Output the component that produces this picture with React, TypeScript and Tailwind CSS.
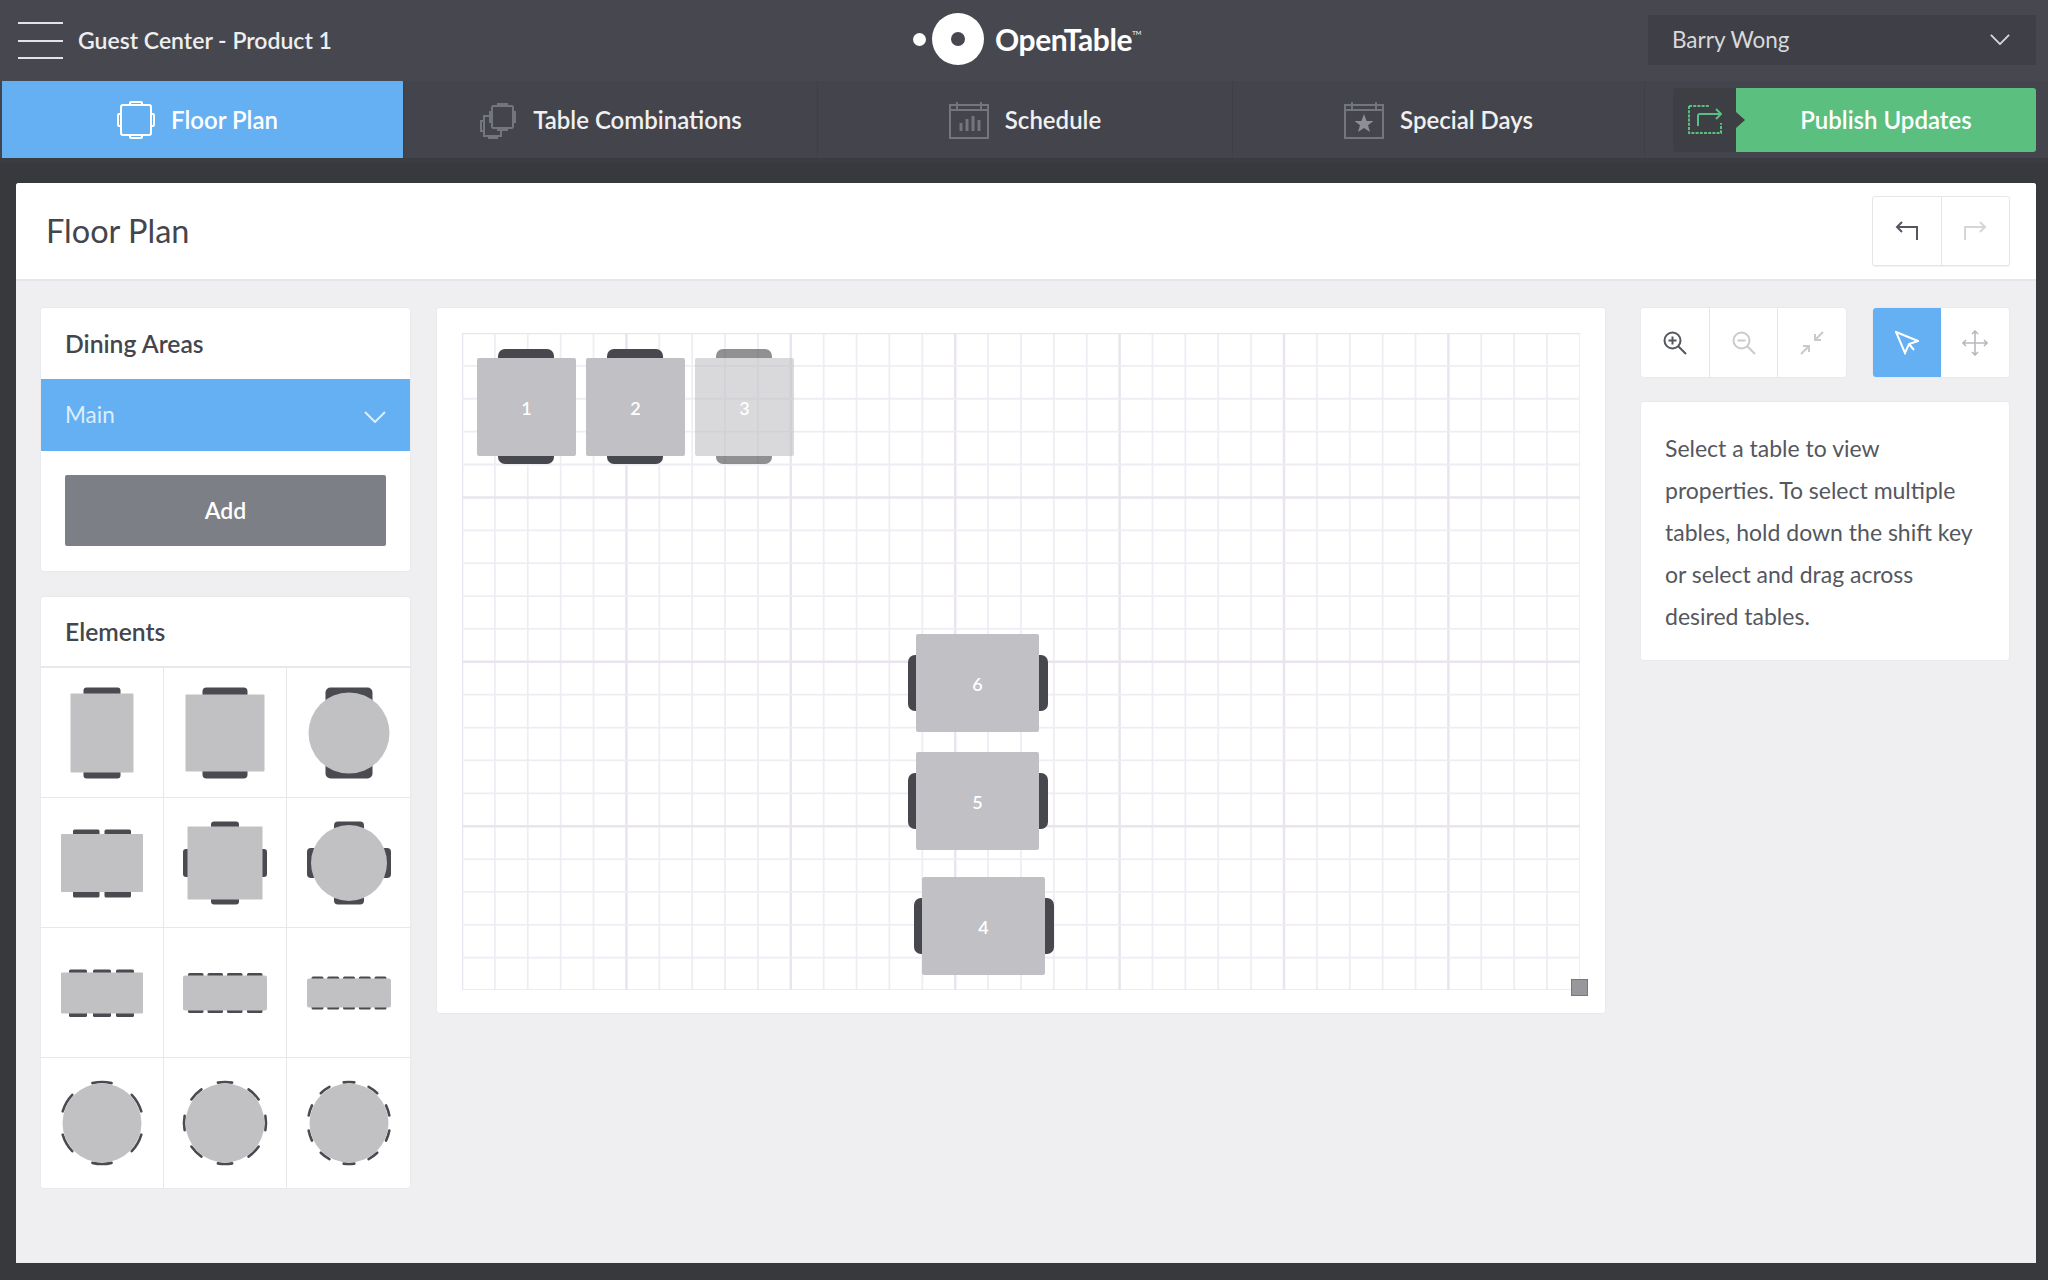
import type { ReactNode } from "react";

const CHAIR = "#4a4b50";
const TOP = "#c1c1c4";

// arc segment on a round table, angle in degrees from the top
function arcPath(r: number, deg: number, span: number) {
  const pt = (a: number) => {
    const rad = ((a - 90) * Math.PI) / 180;
    return `${(r * Math.cos(rad)).toFixed(2)} ${(r * Math.sin(rad)).toFixed(2)}`;
  };
  return `M${pt(deg - span / 2)} A${r} ${r} 0 0 1 ${pt(deg + span / 2)}`;
}

function IconBox({ children }: { children: ReactNode }) {
  return (
    <svg width="100" height="110" viewBox="-50 -55 100 110">
      {children}
    </svg>
  );
}

function Seat({ x, y, w, h, r = 3 }: { x: number; y: number; w: number; h: number; r?: number }) {
  return <rect x={x} y={y} width={w} height={h} rx={r} fill={CHAIR} />;
}

function Rows({ xs, w, top, bottom, h }: { xs: number[]; w: number; top: number; bottom: number; h: number }) {
  return (
    <>
      {xs.map((x) => (
        <g key={x}>
          <Seat x={x} y={top} w={w} h={h} r={1.5} />
          <Seat x={x} y={bottom - h} w={w} h={h} r={1.5} />
        </g>
      ))}
    </>
  );
}

function RoundTable({ count, span }: { count: number; span: number }) {
  const angles = Array.from({ length: count }, (_, i) => (i * 360) / count);
  return (
    <IconBox>
      {angles.map((a) => (
        <path key={a} d={arcPath(41, a, span)} fill="none" stroke={CHAIR} strokeWidth="2.6" strokeLinecap="round" />
      ))}
      <circle r="39.5" fill={TOP} />
    </IconBox>
  );
}

const elementIcons: ReactNode[] = [
  <IconBox key="a">
    <Seat x={-18.5} y={-45.5} w={37} h={12} />
    <Seat x={-18.5} y={33.5} w={37} h={12} />
    <rect x={-31.5} y={-39.5} width={63} height={79} rx={1} fill={TOP} />
  </IconBox>,
  <IconBox key="b">
    <Seat x={-22.5} y={-45.5} w={45} h={12} r={4} />
    <Seat x={-22.5} y={33.5} w={45} h={12} r={4} />
    <rect x={-39.5} y={-38.5} width={79} height={77} rx={1} fill={TOP} />
  </IconBox>,
  <IconBox key="c">
    <Seat x={-23.5} y={-45.5} w={47} h={20} r={5} />
    <Seat x={-23.5} y={25.5} w={47} h={20} r={5} />
    <circle r="40.5" fill={TOP} />
  </IconBox>,
  <IconBox key="d">
    <Rows xs={[-29, 2.5]} w={26.5} top={-33.5} bottom={34.5} h={8} />
    <rect x={-41} y={-29} width={82} height={58} rx={1} fill={TOP} />
  </IconBox>,
  <IconBox key="e">
    <Seat x={-14} y={-41.5} w={28} h={10} />
    <Seat x={-14} y={31.5} w={28} h={10} />
    <Seat x={-42} y={-14} w={10} h={28} />
    <Seat x={32} y={-14} w={10} h={28} />
    <rect x={-37.5} y={-36.5} width={75} height={73} fill={TOP} />
  </IconBox>,
  <IconBox key="f">
    <Seat x={-15} y={-41.5} w={30} h={14} r={4} />
    <Seat x={-15} y={27.5} w={30} h={14} r={4} />
    <Seat x={-42} y={-15} w={14} h={30} r={4} />
    <Seat x={28} y={-15} w={14} h={30} r={4} />
    <circle r="38" fill={TOP} />
  </IconBox>,
  <IconBox key="g">
    <Rows xs={[-33, -9, 14]} w={18} top={-23.5} bottom={24} h={6} />
    <rect x={-41} y={-20.5} width={82} height={41} rx={1} fill={TOP} />
  </IconBox>,
  <IconBox key="h">
    <Rows xs={[-37, -17.5, 2, 22]} w={15.5} top={-20} bottom={20} h={5} />
    <rect x={-42} y={-17.5} width={84} height={35} rx={2} fill={TOP} />
  </IconBox>,
  <IconBox key="i">
    <Rows xs={[-37.5, -21.8, -6, 9.8, 25.5]} w={12} top={-16.5} bottom={16.5} h={5} />
    <rect x={-42} y={-14.5} width={84} height={29} rx={2} fill={TOP} />
  </IconBox>,
  <RoundTable key="j" count={6} span={27} />,
  <RoundTable key="k" count={8} span={20} />,
  <RoundTable key="l" count={10} span={15} />,
];

type Table = { n: number; pos: string; side: "tb" | "lr"; faded?: boolean };

const tables: Table[] = [
  { n: 1, pos: "left-[15px] top-[25px]", side: "tb" },
  { n: 2, pos: "left-[124px] top-[25px]", side: "tb" },
  { n: 3, pos: "left-[233px] top-[25px]", side: "tb", faded: true },
  { n: 6, pos: "left-[454px] top-[301px]", side: "lr" },
  { n: 5, pos: "left-[454px] top-[419px]", side: "lr" },
  { n: 4, pos: "left-[460px] top-[544px]", side: "lr" },
];

function FloorTable({ table }: { table: Table }) {
  const size = table.side === "tb" ? "w-[99px] h-[98px]" : "w-[123px] h-[98px]";
  return (
    <div className={`absolute ${table.pos} ${size} ${table.faded ? "opacity-60" : ""}`}>
      {table.side === "tb" ? (
        <>
          <div className="absolute left-[21px] top-[-9px] h-[9px] w-[56px] rounded-t-[7px] bg-[#47484d]" />
          <div className="absolute bottom-[-8px] left-[21px] h-[8px] w-[56px] rounded-b-[7px] bg-[#47484d]" />
        </>
      ) : (
        <>
          <div className="absolute left-[-8px] top-[21px] h-[56px] w-[8px] rounded-l-[7px] bg-[#47484d]" />
          <div className="absolute right-[-9px] top-[21px] h-[56px] w-[9px] rounded-r-[7px] bg-[#47484d]" />
        </>
      )}
      <div className="flex h-full w-full items-center justify-center rounded-[2px] bg-[#c1c0c4] pt-[2px] text-[18px] font-semibold text-white">
        {table.n}
      </div>
    </div>
  );
}

function FloorGrid() {
  const cell = 32.88;
  const xs = Array.from({ length: 35 }, (_, i) => i);
  const ys = Array.from({ length: 21 }, (_, i) => i);
  return (
    <svg width="1118" height="657" viewBox="0 0 1118 657" className="absolute left-0 top-0">
      {xs.map((i) => (
        <line key={i} x1={i * cell} x2={i * cell} y1="0" y2="657" stroke={i % 5 === 0 ? "#e9e4ed" : "#f0ecf4"} strokeWidth={i % 5 === 0 ? 2.5 : 1.8} />
      ))}
      {ys.map((i) => (
        <line key={i} y1={i * cell} y2={i * cell} x1="0" x2="1118" stroke={i % 5 === 0 ? "#e9e4ed" : "#f0ecf4"} strokeWidth={i % 5 === 0 ? 2.5 : 1.8} />
      ))}
    </svg>
  );
}

function Chevron({ className }: { className: string }) {
  return (
    <svg viewBox="0 0 22 12" className={className} fill="none" stroke="currentColor" strokeWidth="2">
      <path d="M1 1 L11 11 L21 1" />
    </svg>
  );
}

function NavTab({ width, active, icon, label }: { width: string; active?: boolean; icon: ReactNode; label: string }) {
  return (
    <div className={`flex h-full items-center justify-center gap-[16px] border-r border-[#3f4046] text-[24px] font-semibold ${width} ${active ? "bg-[#64b0f2] pr-[10px] text-white" : "text-[#f0f0f1]"}`}>
      {icon}
      <span>{label}</span>
    </div>
  );
}

const navStroke = { fill: "none", stroke: "#74767d", strokeWidth: 2 };

function ToolCell({ children, active, divider }: { children: ReactNode; active?: boolean; divider?: boolean }) {
  return (
    <div className={`flex h-full flex-1 items-center justify-center ${active ? "bg-[#64b0f2]" : ""} ${divider ? "border-l border-[#e6e6e9]" : ""}`}>
      {children}
    </div>
  );
}

export default function App() {
  return (
    <div className="flex h-screen w-full flex-col overflow-hidden bg-[#38393d] font-[Lato,sans-serif]">
      {/* top bar */}
      <header className="flex h-[81px] shrink-0 items-center bg-[#47484f]">
        <div className="flex w-[913px] items-center">
          <div className="ml-[18px] flex h-[37px] w-[45px] flex-col justify-between">
            <div className="h-[2px] bg-[#e4e4e6]" />
            <div className="h-[2px] bg-[#e4e4e6]" />
            <div className="h-[2px] bg-[#e4e4e6]" />
          </div>
          <span className="ml-[15px] text-[23px] font-semibold text-[#eeeeef]">Guest Center - Product 1</span>
        </div>
        <div className="-mt-[3px] flex items-center">
          <div className="h-[13px] w-[13px] rounded-full bg-white" />
          <div className="ml-[6px] flex h-[52px] w-[52px] items-center justify-center rounded-full bg-white">
            <div className="h-[14px] w-[14px] rounded-full bg-[#47484f]" />
          </div>
          <span className="ml-[11px] text-[30px] font-bold tracking-[-0.4px] text-white">OpenTable</span>
          <span className="mb-[14px] text-[6px] text-white">TM</span>
        </div>
        <div className="-mt-[2px] ml-auto mr-[12px] flex h-[50px] w-[388px] items-center justify-between bg-[#3f4047] pl-[24px] pr-[26px] text-[#d9d9dc]">
          <span className="pt-[1px] text-[22.5px]">Barry Wong</span>
          <Chevron className="h-[11px] w-[20px]" />
        </div>
      </header>

      {/* tabs */}
      <nav className="flex h-[77px] shrink-0 items-center bg-[#44454c] pl-[2px]">
        <NavTab
          width="w-[402px]"
          active
          label="Floor Plan"
          icon={
            <svg width="38" height="38" viewBox="0 0 38 38" fill="none" stroke="#fff" strokeWidth="2">
              <rect x="4" y="4" width="30" height="30" rx="2" />
              <path d="M13 4V2Q13 1 14 1H24Q25 1 25 2V4M13 34V36Q13 37 14 37H24Q25 37 25 36V34M4 13H2Q1 13 1 14V24Q1 25 2 25H4M34 13H36Q37 13 37 14V24Q37 25 36 25H34" />
            </svg>
          }
        />
        <NavTab
          width="w-[414px]"
          label="Table Combinations"
          icon={
            <svg width="38" height="38" viewBox="0 0 38 38" {...navStroke}>
              <rect x="13" y="5" width="21" height="22" rx="1.5" />
              <path d="M19 5V3H28V5M34 11H36V21H34M13 11H11V21H13M19 27V29H28V27" />
              <path d="M11 15H5V35H22V29" />
              <path d="M5 20H2V30H5M10 35V37H18V35" />
            </svg>
          }
        />
        <NavTab
          width="w-[415px]"
          label="Schedule"
          icon={
            <svg width="40" height="38" viewBox="0 0 40 38" {...navStroke}>
              <rect x="1" y="4" width="38" height="33" />
              <path d="M1 9H39M8 1V9M32 1V9" />
              <path d="M12 30V22M18 30V18M24 30V15M30 30V19" strokeWidth="3" />
            </svg>
          }
        />
        <NavTab
          width="w-[412px]"
          label="Special Days"
          icon={
            <svg width="40" height="38" viewBox="0 0 40 38" {...navStroke}>
              <rect x="1" y="4" width="38" height="33" />
              <path d="M1 9H39M8 1V9M32 1V9" />
              <path d="M20 13L22.6 20H29.5L24 24.3L26 31L20 27L14 31L16 24.3L10.5 20H17.4Z" fill="#8d8f95" stroke="none" />
            </svg>
          }
        />
        <div className="ml-[28px] flex h-[64px] w-[63px] items-center justify-center rounded-l-[4px] bg-[#3e3f45]">
          <svg width="34" height="31" viewBox="0 0 34 31" fill="none" stroke="#5abf7f" strokeWidth="2">
            <path d="M1 2H21M1 2V29H33V19" strokeDasharray="3 1.2" />
            <path d="M10 22V12Q10 10 12 10H33M28 5L33 10L28 15" />
          </svg>
        </div>
        <div className="relative flex h-[64px] w-[300px] items-center justify-center rounded-r-[3px] bg-[#5abf7f] text-[24px] font-semibold text-white">
          <div className="absolute left-0 top-[24px] h-0 w-0 border-y-[8px] border-l-[9px] border-y-transparent border-l-[#3e3f45]" />
          Publish Updates
        </div>
      </nav>
      <div className="h-[5px] shrink-0 bg-[#3b3c41]" />
      <div className="h-[20px] shrink-0" />

      {/* page */}
      <main className="mb-[17px] ml-[16px] mr-[12px] flex min-h-0 flex-1 flex-col overflow-hidden rounded-t-[3px] bg-[#efeff2]">
        <div className="flex h-[98px] shrink-0 items-center justify-between border-b-2 border-[#e6e6e9] bg-white pl-[30px] pr-[26px]">
          <h1 className="text-[32.5px] text-[#44464d]">Floor Plan</h1>
          <div className="flex h-[70px] w-[138px] rounded-[3px] border border-[#e6e6e9] shadow-[0_1px_1px_rgba(0,0,0,0.06)]">
            <ToolCell>
              <svg width="24" height="20" viewBox="0 0 24 20" fill="none" stroke="#55575e" strokeWidth="2">
                <path d="M7 1L2 6L7 11M2 6H22V19" />
              </svg>
            </ToolCell>
            <ToolCell divider>
              <svg width="24" height="20" viewBox="0 0 24 20" fill="none" stroke="#d5d6da" strokeWidth="2">
                <path d="M17 1L22 6L17 11M22 6H2V19" />
              </svg>
            </ToolCell>
          </div>
        </div>

        <div className="flex items-start pl-[25px] pt-[27px]">
          {/* left column */}
          <div className="flex w-[369px] flex-col gap-[26px]">
            <section className="h-[263px] rounded-[3px] bg-white shadow-[0_0_2px_rgba(0,0,0,0.08)]">
              <h2 className="flex h-[71px] items-center pl-[24px] text-[24.7px] font-semibold text-[#44464d]">Dining Areas</h2>
              <div className="flex h-[72px] items-center justify-between bg-[#64b0f2] pl-[24px] pr-[24px] text-[#dceefd]">
                <span className="text-[22.5px]">Main</span>
                <Chevron className="mt-[3px] h-[12px] w-[22px]" />
              </div>
              <div className="mx-[24px] mt-[24px] flex h-[71px] items-center justify-center rounded-[2px] bg-[#7c7f85] text-[23px] font-semibold text-white">
                Add
              </div>
            </section>
            <section className="rounded-[3px] bg-white shadow-[0_0_2px_rgba(0,0,0,0.08)]">
              <h2 className="flex h-[71px] items-center border-b-2 border-[#e8e8eb] pl-[24px] text-[24.7px] font-semibold text-[#44464d]">Elements</h2>
              <div className="grid grid-cols-3 grid-rows-[130px_130px_130px_130px]">
                {elementIcons.map((icon, i) => (
                  <div key={i} className={`flex items-center justify-center border-[#e8e8ec] ${i % 3 !== 2 ? "border-r" : ""} ${i < 9 ? "border-b" : ""}`}>
                    {icon}
                  </div>
                ))}
              </div>
            </section>
          </div>

          {/* canvas */}
          <section className="ml-[27px] h-[705px] w-[1168px] rounded-[3px] bg-white pl-[25px] pt-[25px] shadow-[0_0_2px_rgba(0,0,0,0.08)]">
            <div className="relative h-[657px] w-[1118px]">
              <FloorGrid />
              {tables.map((t) => (
                <FloorTable key={t.n} table={t} />
              ))}
              <div className="absolute left-[1109px] top-[646px] h-[17px] w-[17px] border border-[#77777b] bg-[#98989c]" />
            </div>
          </section>

          {/* right column */}
          <div className="ml-[36px] flex w-[368px] flex-col gap-[25px]">
            <div className="flex h-[69px] justify-between">
              <div className="flex w-[205px] rounded-[3px] bg-white shadow-[0_0_2px_rgba(0,0,0,0.08)]">
                <ToolCell>
                  <svg width="24" height="24" viewBox="0 0 24 24" fill="none" stroke="#55575e" strokeWidth="2">
                    <circle cx="9.5" cy="9.5" r="8" />
                    <path d="M15 15L23 23M9.5 5.5V13.5M5.5 9.5H13.5" />
                  </svg>
                </ToolCell>
                <ToolCell divider>
                  <svg width="24" height="24" viewBox="0 0 24 24" fill="none" stroke="#c9cacd" strokeWidth="2">
                    <circle cx="9.5" cy="9.5" r="8" />
                    <path d="M15 15L23 23M5.5 9.5H13.5" />
                  </svg>
                </ToolCell>
                <ToolCell divider>
                  <svg width="24" height="24" viewBox="0 0 24 24" fill="none" stroke="#c9cacd" strokeWidth="2">
                    <path d="M23 1L15 9M15 3V9H21M1 23L9 15M3 15H9V21" />
                  </svg>
                </ToolCell>
              </div>
              <div className="flex w-[136px] overflow-hidden rounded-[3px] bg-white shadow-[0_0_2px_rgba(0,0,0,0.08)]">
                <ToolCell active>
                  <svg width="24" height="24" viewBox="0 0 24 24" fill="none" stroke="#fff" strokeWidth="2">
                    <path d="M1 1L23 10L14 13L10 22Z" />
                    <path d="M14 13L19 19" />
                  </svg>
                </ToolCell>
                <ToolCell>
                  <svg width="26" height="26" viewBox="0 0 26 26" fill="none" stroke="#b8b9bd" strokeWidth="1.6">
                    <path d="M13 1V25M1 13H25M10 4L13 1L16 4M10 22L13 25L16 22M4 10L1 13L4 16M22 10L25 13L22 16" />
                  </svg>
                </ToolCell>
              </div>
            </div>
            <div className="h-[258px] rounded-[3px] bg-white pl-[24px] pr-[20px] pt-[25px] text-[23px] leading-[42px] text-[#55575e] shadow-[0_0_2px_rgba(0,0,0,0.08)]">
              Select a table to view properties. To select multiple tables, hold down the shift key or select and drag across desired tables.
            </div>
          </div>
        </div>
      </main>
    </div>
  );
}
